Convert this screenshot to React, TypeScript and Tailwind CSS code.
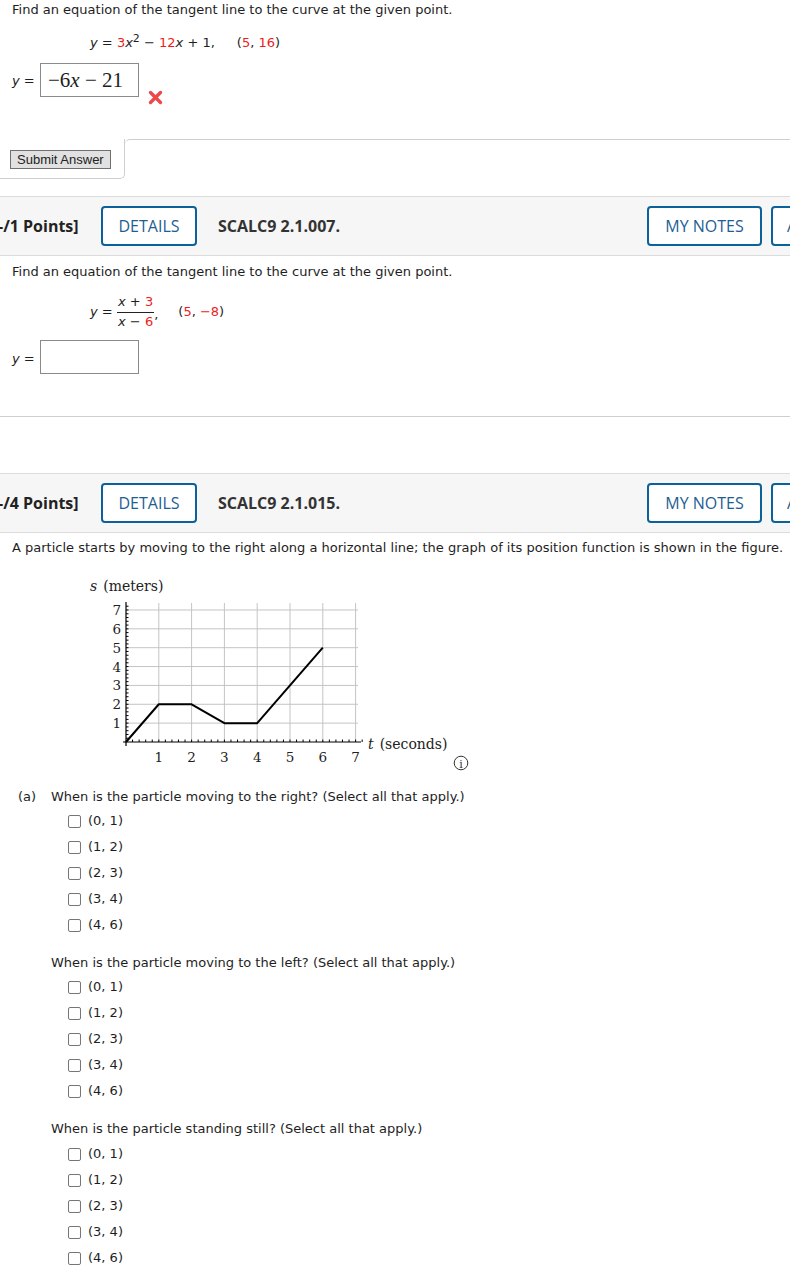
import React from 'react';

const RED = 'text-[#ee1c1c]';

const Checkbox = ({ label }: { label: string }) => (
  <div className="flex h-[26px] items-center gap-[7px] pl-[68px]">
    <span className="h-[13px] w-[13px] rounded-[2px] border border-[#767676] bg-white"></span>
    <span>{label}</span>
  </div>
);

const Choices = () => (
  <div>
    {['(0, 1)', '(1, 2)', '(2, 3)', '(3, 4)', '(4, 6)'].map((c) => (
      <Checkbox key={c} label={c} />
    ))}
  </div>
);

const Header = ({ points, code }: { points: string; code: string }) => (
  <div className="grid h-[60px] grid-cols-[647px_1fr] items-center border-y border-[#dcdcdc] bg-[#f6f6f6] font-['Open_Sans',sans-serif] text-[16px]">
    <div className="flex items-center">
      <div className="w-[101px] shrink-0 overflow-hidden whitespace-nowrap">
        <span className="-ml-[2px] inline-block font-bold text-[#222]">{points}</span>
      </div>
      <button className="flex h-[40px] w-[96px] items-center justify-center rounded-[4px] border-2 border-[#0b6199] bg-white text-[#1d5e93]">
        DETAILS
      </button>
      <span className="ml-[21px] font-bold text-[#333]">{code}</span>
    </div>
    <div className="flex gap-[9px]">
      <button className="flex h-[40px] w-[115px] shrink-0 items-center justify-center rounded-[4px] border-2 border-[#0b6199] bg-white text-[#1d5e93]">
        MY NOTES
      </button>
      <button className="flex h-[40px] w-[200px] shrink-0 items-center justify-start rounded-[4px] border-2 border-[#0b6199] bg-white pl-[14px] text-[#1d5e93] whitespace-nowrap">
        ASK YOUR TEACHER
      </button>
    </div>
  </div>
);

const RedX = () => (
  <svg width="15" height="15" viewBox="0 0 15 15" className="block">
    <path d="M2.5 2.5 L12.5 12.5 M12.5 2.5 L2.5 12.5" stroke="#ec4a4a" strokeWidth="3.4" strokeLinecap="round" />
  </svg>
);

const Graph = () => {
  const ox = 46;
  const oy = 171;
  const ux = 32.8;
  const uy = 18.86;
  const X = (t: number) => ox + ux * t;
  const Y = (s: number) => oy - uy * s;
  const minor: number[] = [];
  for (let i = 1; i <= 36; i++) minor.push(i / 5);
  const pts = [
    [0, 0],
    [1, 2],
    [2, 2],
    [3, 1],
    [4, 1],
    [6, 5],
  ]
    .map(([t, s]) => `${X(t)},${Y(s)}`)
    .join(' ');
  const serif = "'DejaVu Serif', serif";
  return (
    <svg width="400" height="200" viewBox="0 0 400 200" className="ml-[80px] block">
      {[1, 2, 3, 4, 5, 6, 7].map((t) => (
        <line key={'v' + t} x1={X(t)} y1={32} x2={X(t)} y2={oy} stroke="#c4c4c4" strokeWidth="1" />
      ))}
      {[1, 2, 3, 4, 5, 6, 7].map((s) => (
        <line key={'h' + s} x1={ox} y1={Y(s)} x2={278} y2={Y(s)} stroke="#c4c4c4" strokeWidth="1" />
      ))}
      <line x1={ox} y1={31} x2={ox} y2={175} stroke="#000" strokeWidth="1.2" />
      <line x1={43} y1={oy} x2={281} y2={oy} stroke="#000" strokeWidth="1.2" />
      {minor.map((v) => (
        <line key={'tx' + v} x1={X(v)} y1={oy - 2.5} x2={X(v)} y2={oy} stroke="#000" strokeWidth="1" />
      ))}
      {minor.map((v) => (
        <line key={'ty' + v} x1={ox} y1={Y(v)} x2={ox + 2.5} y2={Y(v)} stroke="#000" strokeWidth="1" />
      ))}
      {[1, 2, 3, 4, 5, 6, 7].map((s) => (
        <text key={'ly' + s} x={41} y={Y(s) + 5} textAnchor="end" fontFamily={serif} fontSize="13.5" fill="#222">
          {s}
        </text>
      ))}
      {[1, 2, 3, 4, 5, 6, 7].map((t) => (
        <text key={'lx' + t} x={X(t)} y={191} textAnchor="middle" fontFamily={serif} fontSize="13.5" fill="#222">
          {t}
        </text>
      ))}
      <polyline points={pts} fill="none" stroke="#000" strokeWidth="2" strokeLinejoin="round" />
      <text x={10} y={20} fontFamily={serif} fontSize="14" fill="#222">
        <tspan fontStyle="italic">s</tspan>
        <tspan dx="6">(meters)</tspan>
      </text>
      <text x={288} y={178} fontFamily={serif} fontSize="14" fill="#222">
        <tspan fontStyle="italic">t</tspan>
        <tspan dx="6">(seconds)</tspan>
      </text>
      <circle cx={381} cy={192} r={6.8} fill="none" stroke="#333" strokeWidth="1" />
      <text x={381} y={196.5} textAnchor="middle" fontFamily={serif} fontSize="11" fill="#333">
        i
      </text>
    </svg>
  );
};

export default function App() {
  return (
    <div className="w-[790px] overflow-hidden bg-white pb-[10px] font-['DejaVu_Sans',Verdana,sans-serif] text-[13px] leading-[16px] text-[#1e1e1e]">
      {/* question 1 */}
      <div className="pl-[12px] pt-[2px]">Find an equation of the tangent line to the curve at the given point.</div>
      <div className="mt-[17px] flex whitespace-pre pl-[90px]">
        <span>
          <i>y</i> = <span className={RED}>3</span>
          <i>x</i>
          <sup className="text-[11px]">2</sup> − <span className={RED}>12</span>
          <i>x</i> + 1,
        </span>
        <span className="ml-[22px]">
          (<span className={RED}>5</span>, <span className={RED}>16</span>)
        </span>
      </div>
      <div className="mt-[12px] flex h-[34px] items-start pl-[12px]">
        <span className="mt-[10px] w-[28px]">
          <i>y</i> =
        </span>
        <div className="flex h-[34px] w-[99px] items-center border border-[#8a8a8a] pl-[7px] font-['Liberation_Serif',serif] text-[21px]">
          −6<i>x</i>&nbsp;− 21
        </div>
        <span className="ml-[9px] mt-[27px]">
          <RedX />
        </span>
      </div>
      <div className="mt-[42px] flex h-[40px]">
        <div className="flex w-[125px] items-center rounded-br-[5px] border-r border-b border-[#cfcfcf] pl-[10px]">
          <button className="mt-[2px] h-[19px] border border-[#707070] bg-[#e1e1e1] px-[6px] font-['Liberation_Sans',Arial,sans-serif] text-[13px] leading-[17px] text-[#222]">
            Submit Answer
          </button>
        </div>
        <div className="flex-1 rounded-tl-[5px] border-t border-[#cfcfcf]"></div>
      </div>

      {/* question 2 */}
      <div className="mt-[17px]">
        <Header points="-/1 Points]" code="SCALC9 2.1.007." />
      </div>
      <div className="mt-[8px] pl-[12px]">Find an equation of the tangent line to the curve at the given point.</div>
      <div className="mt-[14px] flex items-center pl-[90px]">
        <span className="w-[27px]">
          <i>y</i> =
        </span>
        <span className="inline-flex flex-col items-center text-[13px] leading-[16px]">
          <span className="px-[1px] pb-[2px]">
            <i>x</i> + <span className={RED}>3</span>
          </span>
          <span className="h-0 w-full border-t border-[#222]"></span>
          <span className="px-[1px] pt-[1px]">
            <i>x</i> − <span className={RED}>6</span>
          </span>
        </span>
        <span className="mt-[6px]">,</span>
        <span className="ml-[20px] whitespace-pre">
          (<span className={RED}>5</span>, <span className={RED}>−8</span>)
        </span>
      </div>
      <div className="mt-[10px] flex items-center pl-[12px]">
        <span className="mt-[3px] w-[28px]">
          <i>y</i> =
        </span>
        <div className="h-[34px] w-[99px] border border-[#8a8a8a]"></div>
      </div>
      <div className="mt-[42px] border-t border-[#cfcfcf]"></div>

      {/* question 3 */}
      <div className="mt-[56px]">
        <Header points="-/4 Points]" code="SCALC9 2.1.015." />
      </div>
      <div className="mt-[7px] whitespace-nowrap pl-[12px]">
        A particle starts by moving to the right along a horizontal line; the graph of its position function is shown in the figure.
      </div>
      <div className="mt-[15px]">
        <Graph />
      </div>
      <div className="mt-[18px] flex pl-[18px]">
        <span className="w-[33px]">(a)</span>
        <span>When is the particle moving to the right? (Select all that apply.)</span>
      </div>
      <div className="mt-[3px]">
        <Choices />
      </div>
      <div className="mt-[17px] pl-[51px]">When is the particle moving to the left? (Select all that apply.)</div>
      <div className="mt-[3px]">
        <Choices />
      </div>
      <div className="mt-[17px] pl-[51px]">When is the particle standing still? (Select all that apply.)</div>
      <div className="mt-[4px]">
        <Choices />
      </div>
    </div>
  );
}
